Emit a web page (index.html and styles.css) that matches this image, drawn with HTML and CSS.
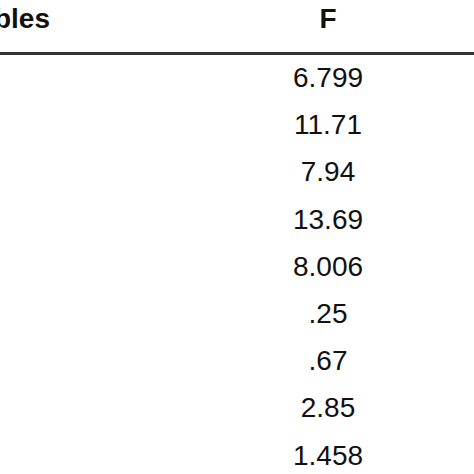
FILE: index.html
```html
<!DOCTYPE html>
<html>
<head>
<meta charset="utf-8">
<link rel="stylesheet" href="styles.css">
</head>
<body>
<div class="table">
  <div class="head">
    <div class="cell var-head">Variables</div>
    <div class="cell f-head">F</div>
  </div>
  <div class="row"><div class="cell"></div><div class="cell val">6.799</div></div>
  <div class="row"><div class="cell"></div><div class="cell val">11.71</div></div>
  <div class="row"><div class="cell"></div><div class="cell val">7.94</div></div>
  <div class="row"><div class="cell"></div><div class="cell val">13.69</div></div>
  <div class="row"><div class="cell"></div><div class="cell val">8.006</div></div>
  <div class="row"><div class="cell"></div><div class="cell val">.25</div></div>
  <div class="row"><div class="cell"></div><div class="cell val">.67</div></div>
  <div class="row"><div class="cell"></div><div class="cell val">2.85</div></div>
  <div class="row"><div class="cell"></div><div class="cell val">1.458</div></div>
</div>
</body>
</html>
```
FILE: styles.css
```css
html, body {
  margin: 0;
  padding: 0;
  background: #ffffff;
  width: 474px;
  height: 474px;
  overflow: hidden;
}
.table {
  width: 474px;
  font-family: "Liberation Sans", Arial, sans-serif;
  font-size: 28px;
  color: #111111;
}
.head, .row {
  display: grid;
  grid-template-columns: 182px 292px;
}
.head {
  height: 52px;
  box-sizing: content-box;
  border-bottom: 3px solid #333333;
  font-weight: bold;
  line-height: 28px;
}
.head .cell {
  padding-top: 5.3px;
}
.var-head {
  margin-left: -73px;
  white-space: nowrap;
}
.f-head {
  text-align: center;
}
.row {
  height: 47.2px;
  line-height: 45.2px;
}
.val {
  text-align: center;
}
```
